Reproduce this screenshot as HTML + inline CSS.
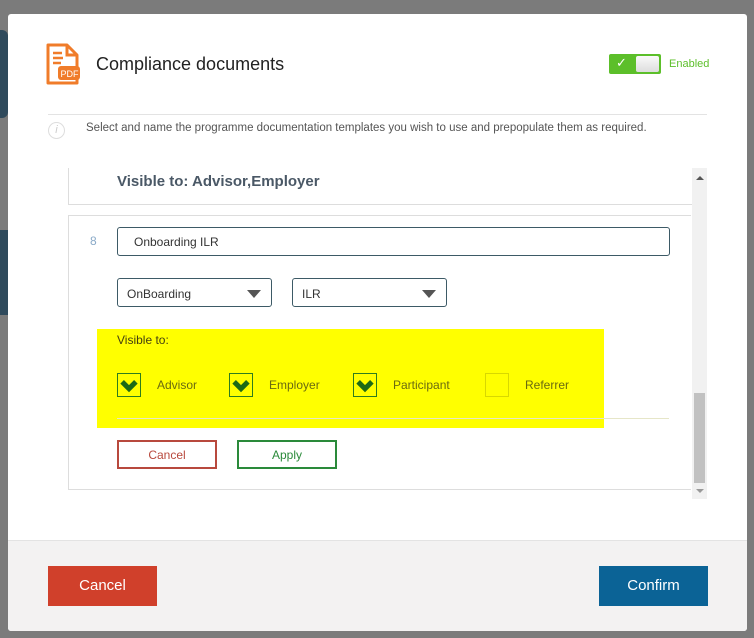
<!DOCTYPE html>
<html><head><style>
*{margin:0;padding:0;box-sizing:border-box}
body{width:754px;height:638px;background:#7b7b7b;position:relative;overflow:hidden;font-family:"Liberation Sans",sans-serif}
.a{position:absolute}
.modal{left:8px;top:14px;width:739px;height:617px;background:#fff;border-radius:3px;overflow:hidden}
.cb{width:24px;height:24px;border:1px solid #2e7d1e}
.lbl{font-size:12px;color:#6b6b10}
.sel{height:29px;border:1px solid #3d5a66;border-radius:3px;font-size:12px;color:#333;padding:8px 0 0 9px}
.tri{position:absolute;right:10px;top:11px;width:0;height:0;border-left:7px solid transparent;border-right:7px solid transparent;border-top:8px solid #555}
</style></head><body>
<div class="a" style="left:0;top:30px;width:8px;height:88px;background:#2f4a5c;border-radius:0 6px 6px 0"></div>
<div class="a" style="left:0;top:230px;width:8px;height:85px;background:#2f4a5c"></div>
<div class="modal a">
 <div class="a" style="left:0;top:526px;width:739px;height:92px;background:#f3f2f2;border-top:1px solid #e3e3e3"></div>
</div>
<svg class="a" style="left:46px;top:43px" width="36" height="42" viewBox="0 0 36 42">
 <path d="M2 2h19l10 10v28H2z" fill="none" stroke="#f07c2a" stroke-width="3" stroke-linejoin="round"/>
 <path d="M21 2v10h10" fill="none" stroke="#f07c2a" stroke-width="3"/>
 <path d="M7 10h9M7 15h10M7 20h8" stroke="#f07c2a" stroke-width="2.5"/>
 <rect x="12" y="23" width="22" height="14" rx="3" fill="#f07c2a"/>
 <text x="14.5" y="34" font-size="9" fill="#fff" font-family="Liberation Sans">PDF</text>
</svg>
<div class="a" style="left:96px;top:54px;font-size:18px;color:#222">Compliance documents</div>
<div class="a" style="left:609px;top:54px;width:52px;height:20px;background:#5cbf2a;border-radius:2px"></div>
<div class="a" style="left:616px;top:55px;color:#fff;font-size:13px">✓</div>
<div class="a" style="left:636px;top:56px;width:23px;height:16px;background:linear-gradient(#fafafa,#ddd);border-radius:2px"></div>
<div class="a" style="left:669px;top:58px;font-size:11px;color:#5cbf2a">Enabled</div>
<div class="a" style="left:48px;top:114px;width:659px;height:1px;background:#e3e3e3"></div>
<div class="a" style="left:48px;top:122px;width:17px;height:17px;border:1px solid #ddd;border-radius:50%;color:#ccc;font-size:11px;text-align:center;line-height:15px;font-style:italic">i</div>
<div class="a" style="left:86px;top:122px;font-size:11.5px;color:#555">Select and name the programme documentation templates you wish to use and prepopulate them as required.</div>
<div class="a" style="left:68px;top:168px;width:624px;height:37px;border-left:1px solid #ddd;border-bottom:1px solid #ddd"></div>
<div class="a" style="left:117px;top:173px;font-size:15px;font-weight:bold;color:#4a5866">Visible to: Advisor,Employer</div>
<div class="a" style="left:692px;top:168px;width:15px;height:331px;background:#f1f1f1"></div>
<div class="a" style="left:694px;top:393px;width:11px;height:90px;background:#c1c1c1"></div>
<div class="a" style="left:696px;top:176px;border-left:4px solid transparent;border-right:4px solid transparent;border-bottom:4px solid #555"></div>
<div class="a" style="left:696px;top:489px;border-left:4px solid transparent;border-right:4px solid transparent;border-top:4px solid #999"></div>
<div class="a" style="left:68px;top:215px;width:623px;height:275px;border:1px solid #ddd;border-right:none"></div>
<div class="a" style="left:90px;top:234px;font-size:12px;color:#8aaac8">8</div>
<div class="a" style="left:117px;top:227px;width:553px;height:29px;border:1px solid #3d5a66;border-radius:3px;font-size:12px;color:#333;padding:7px 0 0 16px">Onboarding ILR</div>
<div class="a sel" style="left:117px;top:278px;width:155px">OnBoarding<div class="tri"></div></div>
<div class="a sel" style="left:292px;top:278px;width:155px">ILR<div class="tri"></div></div>
<div class="a" style="left:97px;top:329px;width:507px;height:99px;background:#ffff00"></div>
<div class="a" style="left:117px;top:333px;font-size:12px;color:#444010">Visible to:</div>
<svg width="0" height="0"><defs><symbol id="ck" viewBox="0 0 24 24"><path d="M4.5 8.5l7.5 7.5 7.5-7.5" fill="none" stroke="#1d6a16" stroke-width="5.5"/></symbol></defs></svg>
<div class="a cb" style="left:117px;top:373px"><svg width="22" height="22"><use href="#ck"/></svg></div>
<div class="a cb" style="left:229px;top:373px"><svg width="22" height="22"><use href="#ck"/></svg></div>
<div class="a cb" style="left:353px;top:373px"><svg width="22" height="22"><use href="#ck"/></svg></div>
<div class="a cb" style="left:485px;top:373px;border-color:#d8d800"></div>
<div class="a lbl" style="left:157px;top:378px">Advisor</div>
<div class="a lbl" style="left:269px;top:378px">Employer</div>
<div class="a lbl" style="left:393px;top:378px">Participant</div>
<div class="a lbl" style="left:525px;top:378px">Referrer</div>
<div class="a" style="left:117px;top:418px;width:552px;height:1px;background:#e6e6c8"></div>
<div class="a" style="left:117px;top:440px;width:100px;height:29px;border:2px solid #b8493d;color:#b8493d;font-size:12px;text-align:center;line-height:26px">Cancel</div>
<div class="a" style="left:237px;top:440px;width:100px;height:29px;border:2px solid #2a8a3a;color:#2a8a3a;font-size:12px;text-align:center;line-height:26px">Apply</div>
<div class="a" style="left:48px;top:566px;width:109px;height:40px;background:#d0402b;color:#fff;font-size:15px;text-align:center;line-height:40px">Cancel</div>
<div class="a" style="left:599px;top:566px;width:109px;height:40px;background:#0b6396;color:#fff;font-size:15px;text-align:center;line-height:40px">Confirm</div>
</body></html>
